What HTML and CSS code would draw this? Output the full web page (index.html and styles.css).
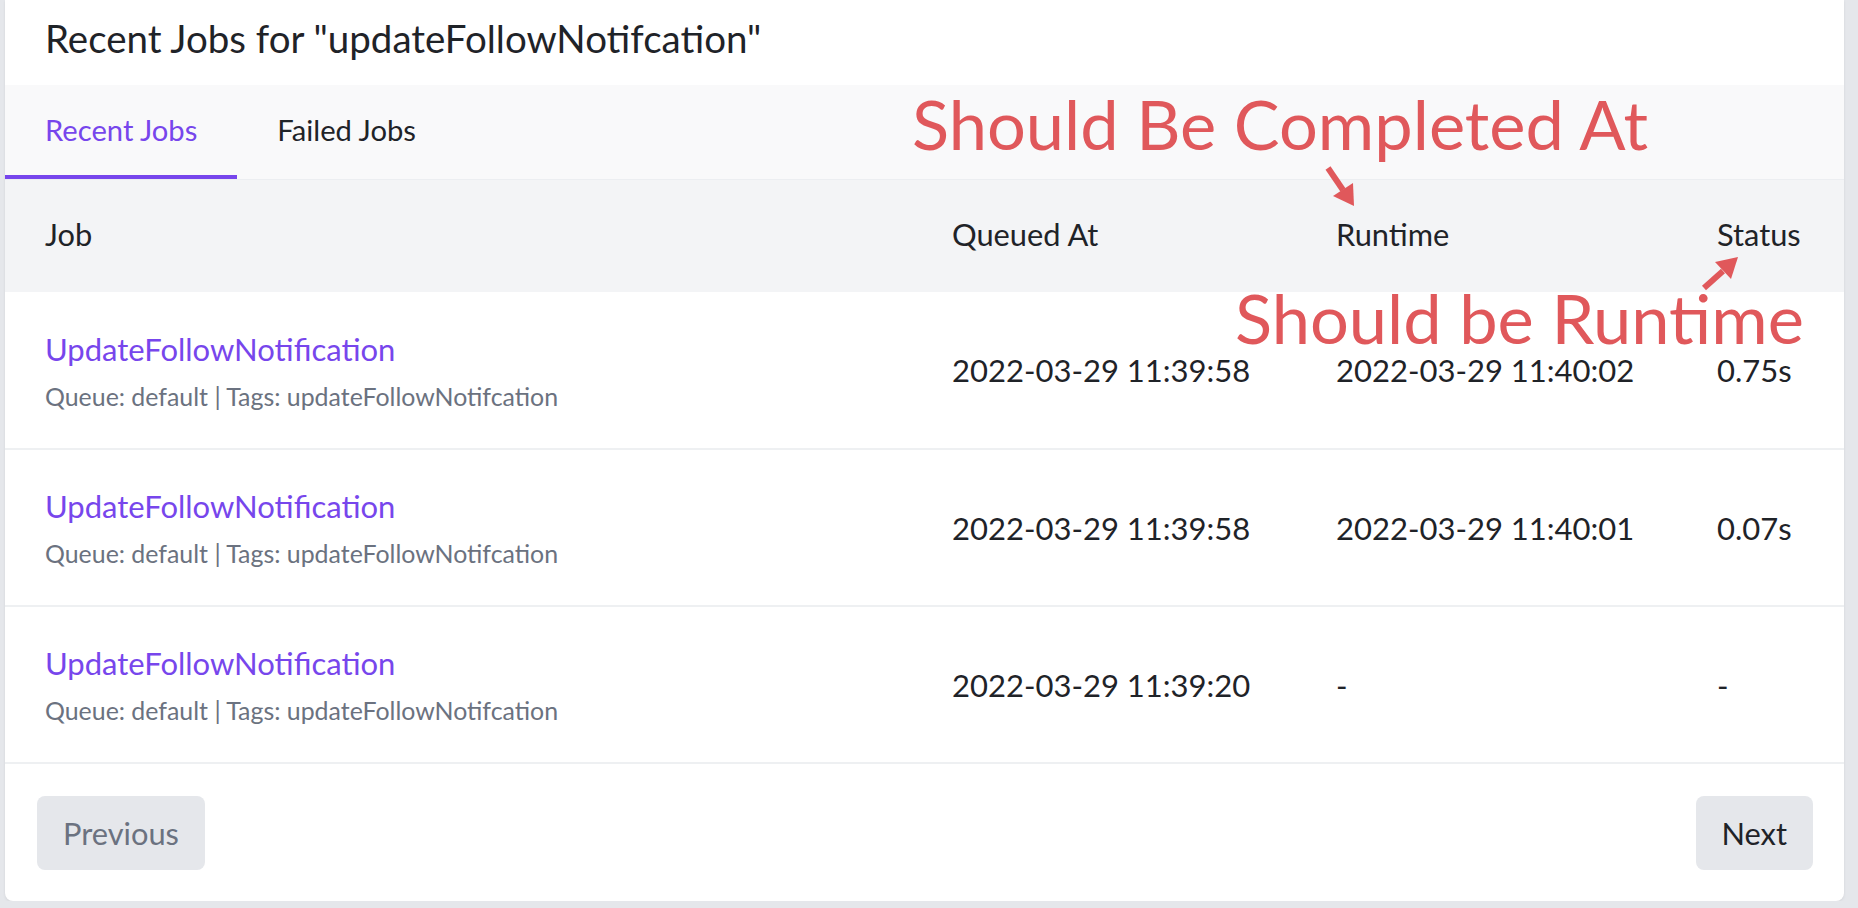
FILE: index.html
```html
<!DOCTYPE html>
<html lang="en">
<head>
    <meta charset="UTF-8">
    <title>Recent Jobs</title>
    <link rel="stylesheet" href="styles.css">
</head>
<body>
    <div class="card">
        <div class="card-header">
            <h2>Recent Jobs for "updateFollowNotifcation"</h2>
        </div>
        <div class="tabs">
            <a class="tab active">Recent Jobs</a>
            <a class="tab">Failed Jobs</a>
        </div>
        <table class="jobs">
            <colgroup>
                <col class="col-job">
                <col class="col-queued">
                <col class="col-runtime">
                <col class="col-status">
            </colgroup>
            <thead>
                <tr>
                    <th>Job</th>
                    <th>Queued At</th>
                    <th>Runtime</th>
                    <th>Status</th>
                </tr>
            </thead>
            <tbody>
                <tr>
                    <td>
                        <a class="job-name">UpdateFollowNotification</a>
                        <div class="job-meta">Queue: default | Tags: updateFollowNotifcation</div>
                    </td>
                    <td>2022-03-29 11:39:58</td>
                    <td>2022-03-29 11:40:02</td>
                    <td>0.75s</td>
                </tr>
                <tr>
                    <td>
                        <a class="job-name">UpdateFollowNotification</a>
                        <div class="job-meta">Queue: default | Tags: updateFollowNotifcation</div>
                    </td>
                    <td>2022-03-29 11:39:58</td>
                    <td>2022-03-29 11:40:01</td>
                    <td>0.07s</td>
                </tr>
                <tr>
                    <td>
                        <a class="job-name">UpdateFollowNotification</a>
                        <div class="job-meta">Queue: default | Tags: updateFollowNotifcation</div>
                    </td>
                    <td>2022-03-29 11:39:20</td>
                    <td>-</td>
                    <td>-</td>
                </tr>
            </tbody>
        </table>
        <div class="pager">
            <button class="btn disabled">Previous</button>
            <button class="btn">Next</button>
        </div>

        <!-- annotations drawn over the screenshot -->
        <div class="note note-completed">Should Be Completed At</div>
        <div class="note note-runtime">Should be Runtime</div>
        <svg class="arrows" width="1839" height="900" viewBox="0 0 1839 900">
            <line x1="1323" y1="168" x2="1338" y2="190" />
            <polygon points="1349,206 1328,196 1348,183" />
            <line x1="1699" y1="288" x2="1718" y2="271" />
            <polygon points="1733,257 1726,279 1710,262" />
        </svg>
    </div>
</body>
</html>
```

FILE: styles.css
```css
body {
    margin: 0;
    background-color: #e5e7eb;
    font-family: Lato, "Noto Sans", sans-serif;
    color: #1f2328;
}
.card {
    position: relative;
    width: 1839px;
    margin: 0 0 0 5px;
    background: white;
    border-radius: 0 0 8px 8px;
    box-shadow: 0 1px 3px rgba(0, 0, 0, 0.08);
}
.card-header {
    height: 85px;
    box-sizing: border-box;
    display: flex;
    align-items: center;
    padding: 0 0 9px 40px;
}
.card-header h2 {
    margin: 0;
    font-size: 38.5px;
    font-weight: 400;
}
.tabs {
    display: flex;
    height: 95px;
    background: #f9f9fa;
    border-bottom: 1px solid #eceef1;
    box-sizing: border-box;
}
.tab {
    display: flex;
    align-items: center;
    padding: 0 40px 2px;
    font-size: 29.2px;
    color: #1f2328;
    border-bottom: 4px solid transparent;
}
.tab.active {
    color: #7746ec;
    border-bottom-color: #7746ec;
}
.jobs {
    width: 1839px;
    border-collapse: collapse;
    table-layout: fixed;
}
.col-job { width: 907px; }
.col-queued { width: 384px; }
.col-runtime { width: 381px; }
.col-status { width: 167px; }
.jobs th {
    height: 112px;
    box-sizing: border-box;
    padding: 0 0 4px 40px;
    background: #f3f4f6;
    text-align: left;
    font-size: 30.8px;
    font-weight: 400;
}
.jobs td {
    height: 157px;
    padding: 0 0 0 40px;
    border-bottom: 2px solid #eef0f2;
    font-size: 31px;
    box-sizing: border-box;
}
.job-name {
    font-size: 31px;
    color: #7746ec;
}
.job-meta {
    margin-top: 13px;
    font-size: 24.9px;
    color: #6b7280;
}
.pager {
    display: flex;
    justify-content: space-between;
    padding: 32px 31px 31px 32px;
}
.btn {
    height: 74px;
    padding: 0 26px;
    font-family: inherit;
    font-size: 30.8px;
    border: none;
    border-radius: 8px;
    background: #e5e7eb;
    color: #1f2328;
}
.btn.disabled {
    color: #6b7280;
}
.note {
    position: absolute;
    font-size: 68.6px;
    line-height: 0.75;
    color: #e0585b;
    white-space: nowrap;
}
.note-completed {
    left: 907px;
    top: 98px;
}
.note-runtime {
    left: 1230px;
    top: 292px;
}
.arrows {
    position: absolute;
    left: 0;
    top: 0;
    pointer-events: none;
}
.arrows line {
    stroke: #e0585b;
    stroke-width: 6;
}
.arrows polygon {
    fill: #e0585b;
}
```
